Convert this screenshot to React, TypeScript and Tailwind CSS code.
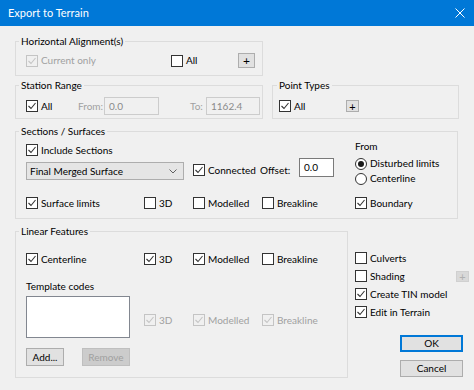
import type { ReactNode } from "react";

const Tick = ({ color }: { color: string }) => (
  <svg width="10" height="10" viewBox="0 0 10 10">
    <path d="M1.5 5 L4 7.5 L8.5 2" fill="none" stroke={color} strokeWidth="1.1" />
  </svg>
);

function Check({
  label,
  checked = false,
  disabled = false,
  className = "",
}: {
  label: string;
  checked?: boolean;
  disabled?: boolean;
  className?: string;
}) {
  return (
    <div className={`flex items-center h-[14px] ${className}`}>
      <span
        className={`w-[12px] h-[12px] shrink-0 border flex items-center justify-center ${
          disabled ? "border-[#c4c4c4] bg-[#f0f0f0]" : "border-[#333333] bg-white"
        }`}
      >
        {checked && <Tick color={disabled ? "#c4c4c4" : "#333333"} />}
      </span>
      <span className={`ml-[3px] whitespace-nowrap ${disabled ? "text-[#a0a0a0]" : "text-black"}`}>{label}</span>
    </div>
  );
}

function Radio({ label, selected = false }: { label: string; selected?: boolean }) {
  return (
    <div className="flex items-center h-[15px]">
      <span className="w-[12px] h-[12px] rounded-full border border-[#333333] bg-white flex items-center justify-center">
        {selected && <span className="w-[6px] h-[6px] rounded-full bg-[#1a1a1a]" />}
      </span>
      <span className="ml-[3px] whitespace-nowrap">{label}</span>
    </div>
  );
}

// group box; horizontal padding goes on the children so the legend stays put
function Group({
  title,
  className = "",
  legendClass = "ml-[3px]",
  children,
}: {
  title: string;
  className?: string;
  legendClass?: string;
  children: ReactNode;
}) {
  return (
    <fieldset className={`border border-[#dcdcdc] ${className}`}>
      <legend className={`px-[2px] leading-[14px] ${legendClass}`}>{title}</legend>
      {children}
    </fieldset>
  );
}

const PlusBtn = ({ className = "", disabled = false }: { className?: string; disabled?: boolean }) => (
  <div
    className={`border flex items-center justify-center leading-none ${
      disabled ? "bg-[#d9d9d9] border-[#d0d0d0] text-[#b0b0b0]" : "bg-[#e1e1e1] border-[#adadad] text-black"
    } ${className}`}
  >
    +
  </div>
);

export default function App() {
  return (
    <div className="w-[474px] h-[390px] font-['Lato','Liberation_Sans',sans-serif] text-[10px] text-black">
      {/* Title bar */}
      <div className="h-[26px] bg-[#0078d7] flex items-center pl-[8px] pr-[9px] text-white text-[11px]">
        <span>Export to Terrain</span>
        <svg className="ml-auto" width="10" height="10" viewBox="0 0 10 10">
          <path d="M0.5 0.5 L9.5 9.5 M9.5 0.5 L0.5 9.5" stroke="white" strokeWidth="1" />
        </svg>
      </div>

      <div className="h-[364px] bg-[#f0f0f0] pl-[15px] pt-[8px]">
        {/* Horizontal alignments */}
        <Group title="Horizontal Alignment(s)" className="w-[248px] pt-[5px] pb-[7px]">
          <div className="flex items-center h-[15px] pl-[10px]">
            <Check label="Current only" checked disabled className="w-[145px]" />
            <Check label="All" className="w-[67px]" />
            <PlusBtn className="w-[17px] h-[15px] text-[12px]" />
          </div>
        </Group>

        {/* Station range + point types */}
        <div className="flex mt-[2px]">
          <Group title="Station Range" className="w-[248px] pt-[5px] pb-[3px]">
            <div className="flex items-center h-[18px] pl-[10px]">
              <Check label="All" checked className="w-[52px]" />
              <span className="w-[26px] text-[#a0a0a0]">From:</span>
              <div className="w-[55px] h-[18px] border border-[#cccccc] bg-[#f0f0f0] text-[#8a8a8a] pl-[4px] flex items-center">0.0</div>
              <span className="ml-[31px] w-[16px] text-[#a0a0a0]">To:</span>
              <div className="w-[54px] h-[18px] border border-[#cccccc] bg-[#f0f0f0] text-[#8a8a8a] pl-[4px] flex items-center">1162.4</div>
            </div>
          </Group>
          <Group title="Point Types" legendClass="ml-[4px]" className="ml-[9px] w-[187px] pt-[5px] pb-[3px]">
            <div className="flex items-center h-[18px] pl-[6px]">
              <Check label="All" checked className="w-[67px]" />
              <PlusBtn className="w-[13px] h-[12px] text-[11px]" />
            </div>
          </Group>
        </div>

        {/* Sections / surfaces */}
        <Group title="Sections / Surfaces" className="mt-[5px] w-[443px] pb-[8px]">
          <div className="flex">
            <div className="w-[339px] pl-[10px]">
              <Check label="Include Sections" checked className="mt-[5px]" />
              <div className="flex items-start mt-[1px]">
                <div className="mt-[4px] w-[158px] h-[18px] border border-[#adadad] bg-[#e5e5e5] flex items-center pl-[3px] pr-[6px]">
                  <span>Final Merged Surface</span>
                  <svg className="ml-auto" width="8" height="5" viewBox="0 0 8 5">
                    <path d="M0.5 0.5 L4 4 L7.5 0.5" fill="none" stroke="#606060" strokeWidth="1" />
                  </svg>
                </div>
                <Check label="Connected" checked className="ml-[9px] mt-[5px] w-[67px]" />
                <span className="mt-[5px] w-[39px] leading-[14px]">Offset:</span>
                <div className="w-[35px] h-[19px] border border-[#7a7a7a] bg-white pl-[4px] flex items-center">0.0</div>
              </div>
            </div>
            <div>
              <div className="mt-[1px] h-[14px] leading-[14px]">From</div>
              <div className="mt-[3px]">
                <Radio label="Disturbed limits" selected />
                <Radio label="Centerline" />
              </div>
            </div>
          </div>
          <div className="flex mt-[10px] pl-[10px]">
            <Check label="Surface limits" checked className="w-[118px]" />
            <Check label="3D" className="w-[49px]" />
            <Check label="Modelled" className="w-[69px]" />
            <Check label="Breakline" className="w-[93px]" />
            <Check label="Boundary" checked />
          </div>
        </Group>

        {/* Linear features + options */}
        <div className="flex items-start mt-[5px]">
          <Group title="Linear Features" className="w-[333px] pb-[11px]">
            <div className="pl-[10px]">
              <div className="flex mt-[14px]">
                <Check label="Centerline" checked className="w-[118px]" />
                <Check label="3D" checked className="w-[49px]" />
                <Check label="Modelled" checked className="w-[69px]" />
                <Check label="Breakline" />
              </div>
              <div className="flex mt-[13px]">
                <div className="w-[104px]">
                  <div className="h-[14px] leading-[14px]">Template codes</div>
                  <div className="mt-[3px] h-[42px] border border-[#828790] bg-white" />
                  <div className="flex mt-[10px]">
                    <div className="w-[38px] h-[18px] border border-[#adadad] bg-[#e1e1e1] flex items-center justify-center">Add...</div>
                    <div className="ml-[18px] w-[48px] h-[18px] border border-[#bfbfbf] bg-[#cccccc] text-[#a0a0a0] flex items-center justify-center">Remove</div>
                  </div>
                </div>
                <div className="flex ml-[14px] mt-[34px] h-[14px]">
                  <Check label="3D" checked disabled className="w-[49px]" />
                  <Check label="Modelled" checked disabled className="w-[69px]" />
                  <Check label="Breakline" checked disabled />
                </div>
              </div>
            </div>
          </Group>

          <div className="ml-[7px] w-[116px] mt-[25px]">
            <div className="h-[18px] flex items-center">
              <Check label="Culverts" />
            </div>
            <div className="h-[18px] flex items-center">
              <Check label="Shading" />
              <PlusBtn disabled className="ml-auto mr-[2px] w-[13px] h-[11px] text-[11px]" />
            </div>
            <div className="h-[18px] flex items-center">
              <Check label="Create TIN model" checked />
            </div>
            <div className="h-[18px] flex items-center">
              <Check label="Edit in Terrain" checked />
            </div>
            <div className="mt-[14px] ml-[45px] w-[63px] h-[17px] border-2 border-[#0078d7] bg-[#e1e1e1] flex items-center justify-center">OK</div>
            <div className="mt-[8px] ml-[45px] w-[63px] h-[17px] border border-[#adadad] bg-[#e1e1e1] flex items-center justify-center">Cancel</div>
          </div>
        </div>
      </div>
    </div>
  );
}
